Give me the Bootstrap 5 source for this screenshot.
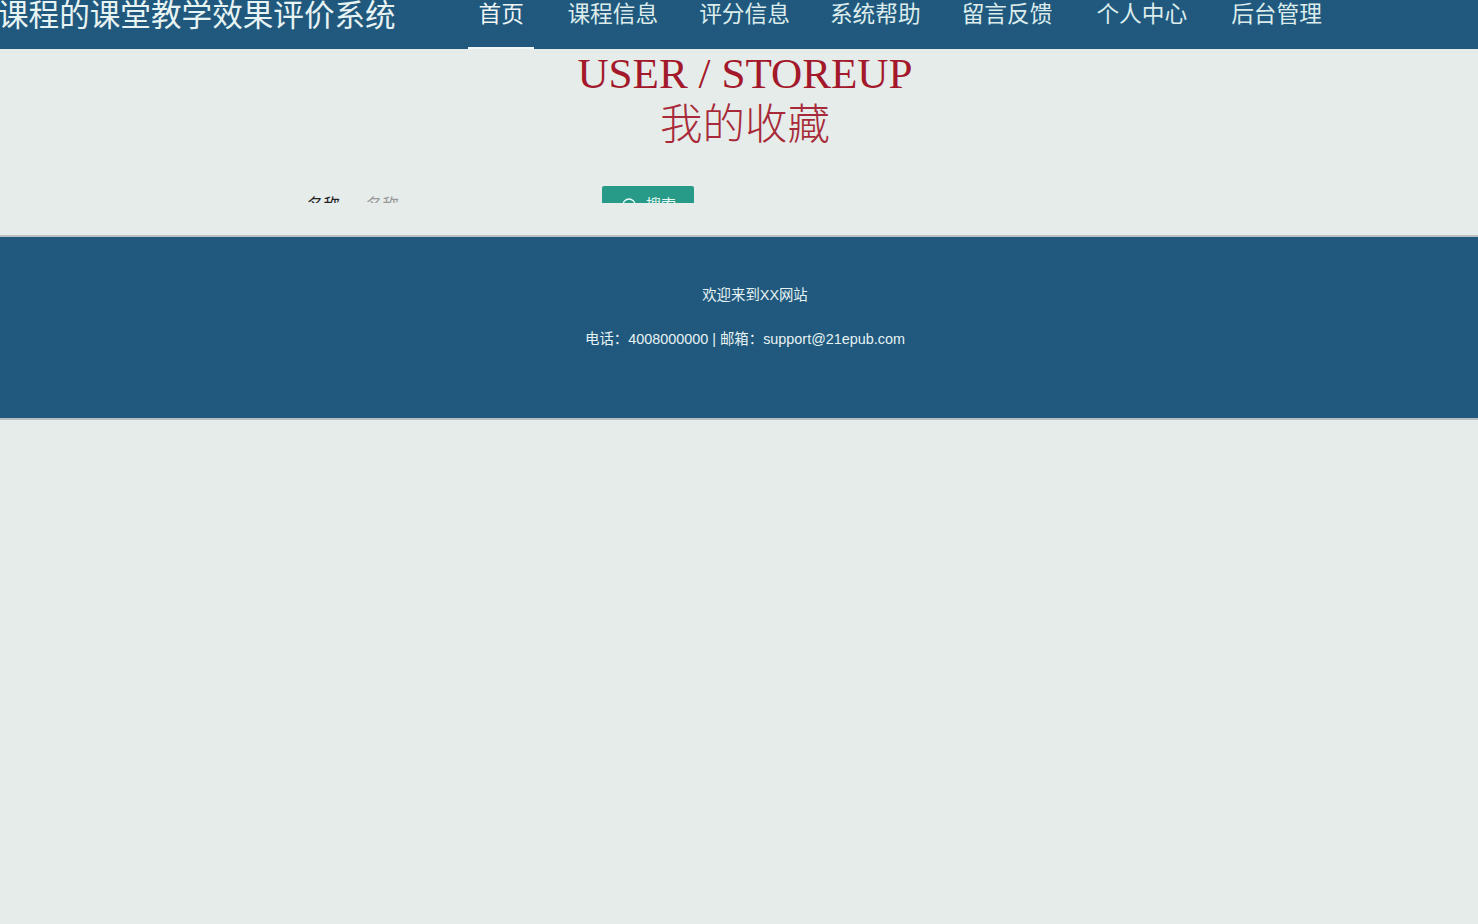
<!DOCTYPE html>
<html lang="zh">
<head>
<meta charset="utf-8">
<title>我的收藏</title>
<link rel="stylesheet" href="https://cdn.jsdelivr.net/npm/bootstrap@5.3.0/dist/css/bootstrap.min.css">
<style>
html,body{height:100%}
body{background:#e6ecea;font-family:"Liberation Sans","Noto Sans CJK SC",sans-serif;overflow:hidden}
.topbar{height:49px;background:#20597d;overflow:hidden;padding:0}
.site-name{font-size:30.6px;line-height:30px;color:#e8f3f3;margin-left:-2px;width:470px;white-space:nowrap;flex:none}
.menu{gap:21px;margin:0;padding:0;list-style:none}
.menu a{display:block;height:49px;padding:0 10px;font-size:22.7px;line-height:28px;color:#dcecec;text-decoration:none;white-space:nowrap}
.menu a.current{border-bottom:2px solid #f0f6f6;color:#f0f6f6;padding:0 10.5px}
.menu .shift-a{margin-left:2px}
.menu .shift-b{margin-left:-1px}
.menu .shift-d{margin-left:3px}
.head-title{color:#a3192b;font-family:"Liberation Serif","Noto Sans CJK SC",serif;text-align:center;margin:0;padding-top:1px;padding-left:12px;font-weight:400}
.head-title .en{display:block;font-size:43.2px;line-height:48px}
.head-title .zh{display:block;font-size:42.5px;line-height:52px;font-weight:300;opacity:.92;padding-top:1px}
.search-area{padding-left:307px;padding-top:36px;height:53px;overflow:hidden;margin-top:-1px}
.search-row{height:38px;width:387px}
.search-label{font-size:16.5px;color:#222;margin-right:26px;line-height:38px}
.search-input{font-size:16.5px;color:#999;width:236px;line-height:38px}
.search-btn{width:92px;height:38px;background:#279b88;color:#eafaf6;border:0;border-radius:2px;font-size:15px;padding:0 0 0 2px;gap:10px}
.foot{margin-top:32px;height:185px;background:#20597d;border-top:2px solid #b9bfc1;border-bottom:2px solid #b9bfc1;color:#e6f2f4;font-size:14.4px}
.foot-line1{padding-top:48px;padding-left:32px;line-height:20px;margin:0}
.foot-line2{padding-top:24px;padding-left:12px;line-height:20px;margin:0}
</style>
</head>
<body>
<nav class="topbar d-flex">
  <div class="site-name">课程的课堂教学效果评价系统</div>
  <ul class="menu d-flex">
    <li><a class="current" href="#">首页</a></li>
    <li class="shift-a"><a href="#">课程信息</a></li>
    <li><a href="#">评分信息</a></li>
    <li class="shift-b"><a href="#">系统帮助</a></li>
    <li><a href="#">留言反馈</a></li>
    <li class="shift-d"><a href="#">个人中心</a></li>
    <li class="shift-d"><a href="#">后台管理</a></li>
  </ul>
</nav>
<h1 class="head-title"><span class="en">USER / STOREUP</span><span class="zh">我的收藏</span></h1>
<div class="search-area">
  <div class="search-row d-flex">
    <span class="search-label">名称</span>
    <span class="search-input">名称</span>
    <button class="search-btn btn d-flex align-items-center justify-content-center" type="button">
      <svg width="14" height="14" viewBox="0 0 14 14" fill="none" stroke="#eafaf6" stroke-width="1.3"><circle cx="7" cy="7" r="6"/></svg>
      <span>搜索</span>
    </button>
  </div>
</div>
<footer class="foot text-center">
  <p class="foot-line1">欢迎来到XX网站</p>
  <p class="foot-line2">电话：4008000000 | 邮箱：support@21epub.com</p>
</footer>
<script src="https://cdn.jsdelivr.net/npm/bootstrap@5.3.0/dist/js/bootstrap.bundle.min.js"></script>
</body>
</html>
